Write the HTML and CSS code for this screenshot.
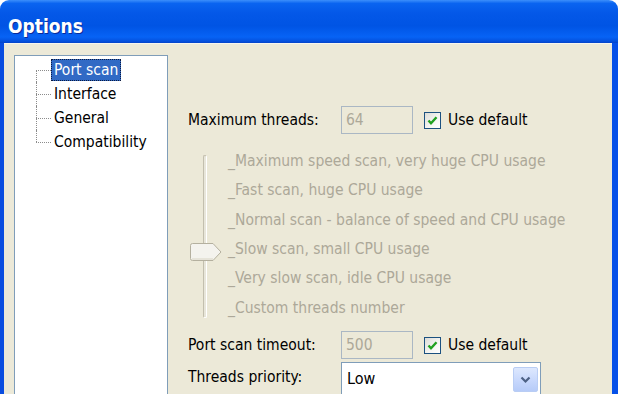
FILE: index.html
```html
<!DOCTYPE html>
<html lang="en">
<head>
  <meta charset="UTF-8">
  <title>Options</title>
  <link rel="stylesheet" href="styles.css">
</head>
<body>
  <div class="window">
    <div class="titlebar">
      <span class="title">Options</span>
    </div>
    <div class="frame">
      <div class="client">
        <ul class="tree">
          <li class="tree-item"><span class="tree-label selected">Port scan</span></li>
          <li class="tree-item"><span class="tree-label">Interface</span></li>
          <li class="tree-item"><span class="tree-label">General</span></li>
          <li class="tree-item"><span class="tree-label">Compatibility</span></li>
        </ul>

        <div class="settings">
          <div class="field-row">
            <span class="field-label">Maximum threads:</span>
            <span class="text-input disabled">64</span>
            <span class="checkbox">
              <svg width="11" height="11" viewBox="0 0 11 11"><path d="M1.5 5.5 L4 8.2 L9.5 2.2" fill="none" stroke="#21a121" stroke-width="2.4"/></svg>
            </span>
            <span class="check-label">Use default</span>
          </div>

          <div class="slider">
            <div class="slider-track">
              <div class="groove"></div>
              <svg class="thumb" width="33" height="18" viewBox="0 0 33 18">
                <path d="M1.5 2.5 Q1.5 0.5 3.5 0.5 L24 0.5 L32 9 L24 17.5 L3.5 17.5 Q1.5 17.5 1.5 15.5 Z" fill="#f4f3ee" stroke="#b4b09f"/>
                <path d="M3 16 L24 16" stroke="#d8d4c4"/>
              </svg>
            </div>
            <ul class="slider-labels">
              <li>_Maximum speed scan, very huge CPU usage</li>
              <li>_Fast scan, huge CPU usage</li>
              <li>_Normal scan - balance of speed and CPU usage</li>
              <li>_Slow scan, small CPU usage</li>
              <li>_Very slow scan, idle CPU usage</li>
              <li>_Custom threads number</li>
            </ul>
          </div>

          <div class="field-row timeout-row">
            <span class="field-label">Port scan timeout:</span>
            <span class="text-input disabled">500</span>
            <span class="checkbox">
              <svg width="11" height="11" viewBox="0 0 11 11"><path d="M1.5 5.5 L4 8.2 L9.5 2.2" fill="none" stroke="#21a121" stroke-width="2.4"/></svg>
            </span>
            <span class="check-label">Use default</span>
          </div>

          <div class="field-row priority-row">
            <span class="field-label">Threads priority:</span>
            <div class="combo">
              <span class="combo-value">Low</span>
              <span class="combo-button">
                <svg width="11" height="8" viewBox="0 0 11 8"><path d="M1.5 1.5 L5.5 5.5 L9.5 1.5" fill="none" stroke="#4d6185" stroke-width="2.2"/></svg>
              </span>
            </div>
          </div>
        </div>
      </div>
    </div>
  </div>
</body>
</html>
```

FILE: styles.css
```css
body {
  margin: 0;
  background-color: #ffffff;
  font-family: "DejaVu Sans Condensed", "Liberation Sans", Arial, sans-serif;
  font-size: 15.5px;
}

.window {
  width: 618px;
  height: 394px;
  overflow: hidden;
}

.titlebar {
  height: 43px;
  box-sizing: border-box;
  padding: 0 0 0 8px;
  display: flex;
  align-items: center;
  border-radius: 9px 9px 0 0;
  background: linear-gradient(to bottom, #3c8ffb 0%, #0a64f0 8%, #0458e8 30%, #0054e4 60%, #0763f5 86%, #0450dd 96%, #0343c8 100%);
}

.title {
  color: #ffffff;
  font-family: "DejaVu Sans Condensed", "Liberation Sans", Arial, sans-serif;
  font-weight: bold;
  font-size: 19px;
  text-shadow: 1px 1px 0 #0a2c9a;
  margin-top: 8px;
}

.frame {
  height: 351px;
  border-left: 4px solid #0a4de0;
  border-right: 6px solid #0650e8;
  box-shadow: inset 1px 0 0 #1a62f2;
}

.client {
  height: 100%;
  box-sizing: border-box;
  background-color: #ece9d8;
  border-top: 1px solid #f6f5ee;
  padding: 11px 0 0 10px;
  display: flex;
  gap: 20px;
}

.tree {
  width: 154px;
  height: 360px;
  box-sizing: border-box;
  flex-shrink: 0;
  margin: 0;
  padding: 2px 0 0 0;
  list-style: none;
  background-color: #ffffff;
  border: 1px solid #7f9db9;
}

.tree-item {
  position: relative;
  height: 24px;
  padding-left: 36px;
  display: flex;
  align-items: center;
}

.tree-item::before {
  content: "";
  position: absolute;
  left: 21px;
  top: 12px;
  width: 15px;
  border-top: 1px dotted #8c8c8c;
}

.tree-item::after {
  content: "";
  position: absolute;
  left: 21px;
  top: 0;
  bottom: 0;
  border-left: 1px dotted #8c8c8c;
}

.tree-item:first-child::after {
  top: 12px;
}

.tree-item:last-child::after {
  bottom: 12px;
}

.tree-label {
  padding: 1px 2px 1px 2px;
  line-height: 18px;
  color: #000000;
  border: 1px solid transparent;
}

.tree-label.selected {
  background-color: #316ac5;
  color: #ffffff;
  border: 1px dotted #0b1a40;
}

.settings {
  padding-top: 51px;
  display: flex;
  flex-direction: column;
  color: #000000;
}

.field-row {
  display: flex;
  align-items: center;
  height: 28px;
}

.field-label {
  width: 153px;
}

.text-input {
  width: 72px;
  height: 28px;
  box-sizing: border-box;
  padding-left: 4px;
  display: flex;
  align-items: center;
  border: 1px solid #aab7c4;
}

.text-input.disabled {
  color: #aca899;
  background-color: #ece9d8;
}

.checkbox {
  width: 17px;
  height: 17px;
  box-sizing: border-box;
  margin-left: 11px;
  display: flex;
  align-items: center;
  justify-content: center;
  border: 1px solid #1c5180;
  background: linear-gradient(135deg, #dcdcd7 0%, #f6f6f3 60%, #ffffff 100%);
}

.check-label {
  margin-left: 7px;
}

.slider {
  margin-top: 11px;
  height: 176px;
  display: flex;
}

.slider-track {
  position: relative;
  width: 40px;
  flex-shrink: 0;
}

.groove {
  position: absolute;
  left: 15px;
  top: 10px;
  bottom: 3px;
  width: 4px;
  box-sizing: border-box;
  border: 1px solid #c3bfae;
  border-right-color: #ffffff;
  border-bottom-color: #ffffff;
  border-radius: 2px;
  background-color: #e8e6da;
}

.thumb {
  position: absolute;
  left: 1px;
  top: 98px;
}

.slider-labels {
  margin: 0;
  padding: 2px 0 0 0;
  list-style: none;
  color: #aca899;
}

.slider-labels li {
  height: 29.33px;
  line-height: 29.33px;
  white-space: nowrap;
}

.timeout-row {
  margin-top: 10px;
}

.priority-row {
  margin-top: 3px;
  align-items: flex-start;
  height: 40px;
}

.priority-row .field-label {
  margin-top: 6px;
}

.combo {
  width: 200px;
  height: 33px;
  box-sizing: border-box;
  display: flex;
  align-items: center;
  justify-content: space-between;
  padding: 0 2px 0 5px;
  background-color: #ffffff;
  border: 1px solid #7f9db9;
}

.combo-value {
  font-size: 16px;
}

.combo-button {
  width: 25px;
  height: 25px;
  margin-top: 2px;
  box-sizing: border-box;
  display: flex;
  align-items: center;
  justify-content: center;
  border-radius: 2px;
  border: 1px solid #b9cdf4;
  background: linear-gradient(to bottom, #dde8fe 0%, #c5d6fc 60%, #b6cbf8 100%);
}
```
